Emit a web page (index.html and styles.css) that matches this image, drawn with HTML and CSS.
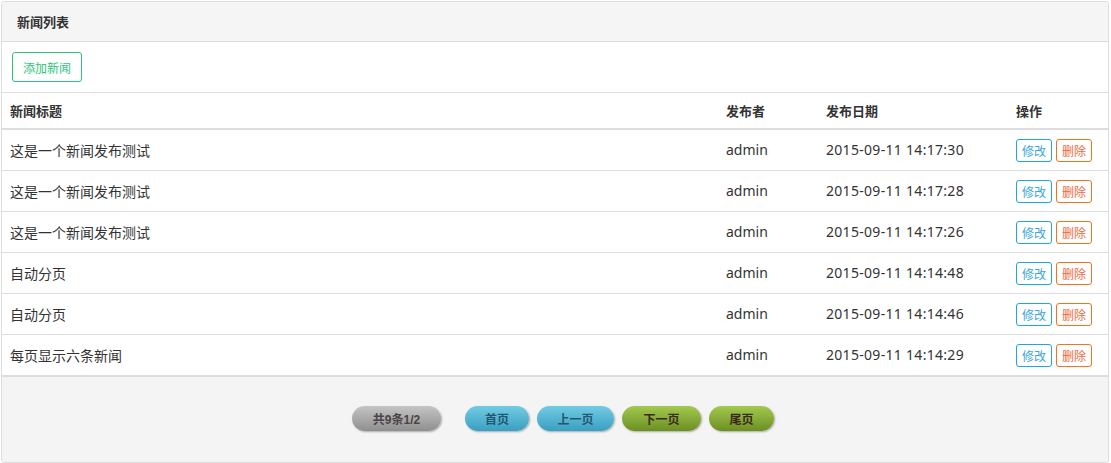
FILE: index.html
```html
<!DOCTYPE html>
<html lang="zh-CN">
<head>
<meta charset="utf-8">
<title>新闻列表</title>
<link rel="stylesheet" href="styles.css">
</head>
<body>
<div class="panel">
  <div class="panel-heading">新闻列表</div>
  <div class="toolbar">
    <a class="btn-add">添加新闻</a>
  </div>
  <table class="news">
    <colgroup>
      <col>
      <col class="c-author">
      <col class="c-date">
      <col class="c-op">
    </colgroup>
    <thead>
      <tr><th>新闻标题</th><th>发布者</th><th>发布日期</th><th>操作</th></tr>
    </thead>
    <tbody>
      <tr><td>这是一个新闻发布测试</td><td>admin</td><td class="date">2015-09-11 14:17:30</td><td><a class="op op-edit">修改</a><a class="op op-del">删除</a></td></tr>
      <tr><td>这是一个新闻发布测试</td><td>admin</td><td class="date">2015-09-11 14:17:28</td><td><a class="op op-edit">修改</a><a class="op op-del">删除</a></td></tr>
      <tr><td>这是一个新闻发布测试</td><td>admin</td><td class="date">2015-09-11 14:17:26</td><td><a class="op op-edit">修改</a><a class="op op-del">删除</a></td></tr>
      <tr><td>自动分页</td><td>admin</td><td class="date">2015-09-11 14:14:48</td><td><a class="op op-edit">修改</a><a class="op op-del">删除</a></td></tr>
      <tr><td>自动分页</td><td>admin</td><td class="date">2015-09-11 14:14:46</td><td><a class="op op-edit">修改</a><a class="op op-del">删除</a></td></tr>
      <tr><td>每页显示六条新闻</td><td>admin</td><td class="date">2015-09-11 14:14:29</td><td><a class="op op-edit">修改</a><a class="op op-del">删除</a></td></tr>
    </tbody>
  </table>
  <div class="panel-footer">
    <div class="pager">
      <span class="pg pg-gray pg-total">共9条1/2</span>
      <a class="pg pg-blue pg-first">首页</a>
      <a class="pg pg-blue pg-prev">上一页</a>
      <a class="pg pg-green pg-next">下一页</a>
      <a class="pg pg-green pg-last">尾页</a>
    </div>
  </div>
</div>
</body>
</html>
```
FILE: styles.css
```css
* { box-sizing: border-box; }
html, body { margin: 0; padding: 0; background: #fff; }
body {
  padding: 1px 0 0 1px;
  font-family: "Noto Sans", "Noto Sans CJK SC", sans-serif;
  font-size: 14px;
  color: #333;
}
.panel {
  width: 1108px;
  height: 462px;
  border: 1px solid #ddd;
  border-radius: 3px;
  overflow: hidden;
  display: flex;
  flex-direction: column;
}
.panel-heading {
  height: 40px;
  flex: none;
  background: #f5f5f5;
  border-bottom: 1px solid #ddd;
  padding: 0 15px;
  display: flex;
  align-items: center;
  font-size: 13px;
  font-weight: bold;
  color: #333;
}
.toolbar {
  height: 51px;
  flex: none;
  padding: 10px 10px 0;
  border-bottom: 1px solid #ddd;
}
.btn-add {
  display: inline-flex;
  align-items: center;
  justify-content: center;
  width: 70px;
  height: 30px;
  border: 1px solid #2ec57a;
  border-radius: 3px;
  color: #2ec57a;
  font-size: 12px;
  font-family: "Noto Sans CJK SC", sans-serif;
}
.news {
  width: 100%;
  border-collapse: collapse;
  table-layout: fixed;
  flex: none;
}
.c-author { width: 100px; }
.c-date { width: 190px; }
.c-op { width: 100px; }
.news th {
  text-align: left;
  font-weight: bold;
  font-size: 13px;
  height: 36px;
  padding: 0 8px;
  border-bottom: 2px solid #ddd;
  color: #333;
}
.news td {
  height: 41px;
  padding: 0 8px;
  border-bottom: 1px solid #ddd;
  white-space: nowrap;
}
.news td.date { letter-spacing: 0.3px; }
.news td:last-child { padding-top: 1px; }
.op {
  display: inline-flex;
  align-items: center;
  justify-content: center;
  width: 36px;
  height: 23px;
  border: 1px solid;
  border-radius: 3px;
  font-size: 12px;
  font-family: "Noto Sans CJK SC", sans-serif;
  vertical-align: middle;
  letter-spacing: 0;
}
.op-edit { border-color: #1ba6e8; color: #3da5dd; }
.op-del { border-color: #f7721f; color: #f0683a; margin-left: 4px; }
.panel-footer {
  flex: 1;
  background: #f4f4f4;
  border-top: 1px solid #ddd;
  padding-top: 29px;
}
.pager {
  display: flex;
  padding-left: 350px;
}
.pg {
  display: inline-flex;
  align-items: center;
  justify-content: center;
  height: 25px;
  border-radius: 13px;
  font-size: 12px;
  font-weight: bold;
  font-family: "Liberation Sans", "Noto Sans CJK SC", sans-serif;
  box-shadow: 1px 1px 2px rgba(0,0,0,0.3);
  margin-right: 8px;
}
.pg-gray {
  background: linear-gradient(#c4c4c4, #8f8f8f);
  color: #4a4446;
}
.pg-blue {
  background: linear-gradient(#72cbe4, #3b9fc1);
  color: #1f5870;
}
.pg-green {
  background: linear-gradient(#a3c950, #6c8f22);
  color: #3a2a1e;
}
.pg-total { width: 89px; margin-right: 24px; }
.pg-first { width: 64px; }
.pg-prev { width: 77px; }
.pg-next { width: 79px; }
.pg-last { width: 65px; }
```
